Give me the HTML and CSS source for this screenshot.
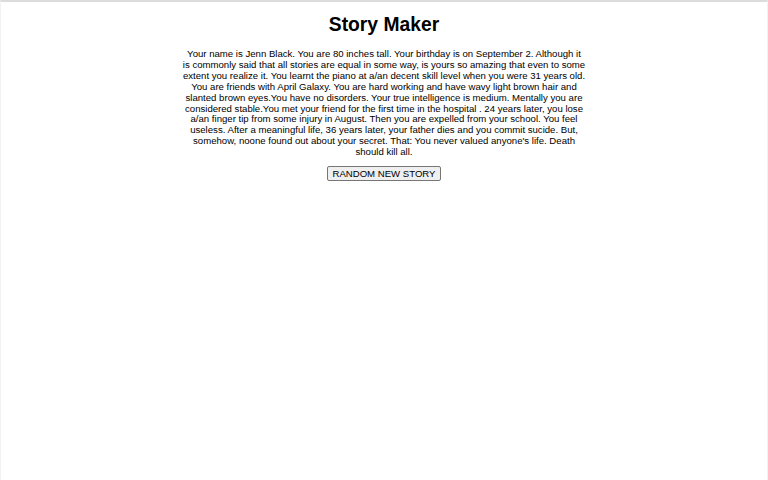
FILE: index.html
```html
<!DOCTYPE html>
<html lang="en">
<head>
    <meta charset="UTF-8">
    <meta name="viewport" content="width=device-width, initial-scale=1.0">
    <title>Story Maker</title>
    <link rel="stylesheet" href="styles.css">
</head>
<body>
    <div class="container">
        <h1>Story Maker</h1>
        <p id="story">Your name is Jenn Black. You are 80 inches tall. Your birthday is on September 2. Although it<br>is commonly said that all stories are equal in some way, is yours so amazing that even to some extent you realize it. You learnt the piano at a/an decent skill level when you were 31 years old. You are friends with April Galaxy. You are hard working and have wavy light brown hair and slanted brown eyes.You have no disorders. Your true intelligence is medium. Mentally you are considered stable.You met your friend for the first time in the hospital . 24 years later, you lose a/an finger tip from some injury in August. Then you are expelled from your school. You feel useless. After a meaningful life, 36 years later, your father dies and you commit sucide. But, somehow, noone found out about your secret. That: You never valued anyone's life. Death should kill all.</p>
        <button class="button" id="new-story">RANDOM NEW STORY</button>
    </div>
</body>
</html>
```

FILE: styles.css
```css
html, body {
    height: 100%;
}
body {
    font-family: "Liberation Sans", Arial, sans-serif;
    background: #fff;
    color: #000;
    margin: 0;
    border-top: 2px solid #dcdcdc;
    border-left: 1px solid #f2f2f2;
    border-right: 1px solid #f2f2f2;
    box-sizing: border-box;
}
.container {
    display: flex;
    flex-direction: column;
    align-items: center;
    text-align: center;
}
h1 {
    font-size: 19.3px;
    margin: 12px 0 0;
}
#story {
    width: 407px;
    font-size: 9.6px;
    line-height: 10.9px;
    margin: 13px 0 0;
}
.button {
    font-family: "Liberation Sans", Arial, sans-serif;
    font-size: 9.6px;
    margin-top: 8px;
    padding: 1px 4px;
    background: #efefef;
    border: 1px solid #767676;
    border-radius: 2px;
    color: #000;
}
```
